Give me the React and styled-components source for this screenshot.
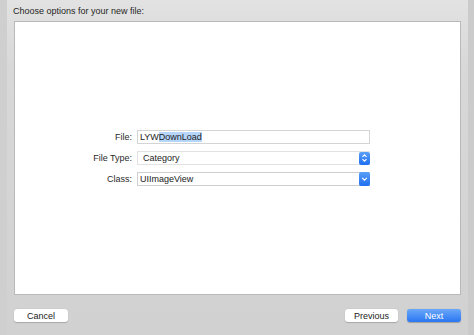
import React from "react";
import styled, { createGlobalStyle } from "styled-components";

const Global = createGlobalStyle`
  html, body { margin: 0; padding: 0; }
  body { font-family: "Liberation Sans", Arial, sans-serif; }
`;

const Window = styled.div`
  width: 474px;
  height: 335px;
  box-sizing: border-box;
  background: linear-gradient(#e2e2e2, #d8d8d8 20%, #d1d1d1);
  display: flex;
  flex-direction: column;
  border-left: 7px solid #cfcfcf;
  border-right: 6px solid #cbcbcb;
  overflow: hidden;
`;

const Title = styled.div`
  height: 21px;
  box-sizing: border-box;
  padding: 6px 0 0 6px;
  font-size: 9px;
  color: #262626;
`;

const Panel = styled.div`
  margin: 0 0 0 7px;
  width: 447px;
  height: 274px;
  box-sizing: border-box;
  background: #fff;
  border: 1px solid #b9b9b9;
  display: flex;
  align-items: center;
  justify-content: flex-start;
`;

const Form = styled.div`
  display: grid;
  grid-template-columns: 117px 233px;
  column-gap: 5px;
  row-gap: 7px;
  align-items: center;
  margin-top: 0px;
`;

const Label = styled.div`
  text-align: right;
  font-size: 9px;
  color: #2a2a2a;
`;

const Field = styled.div`
  height: 14px;
  box-sizing: border-box;
  border: 1px solid #d4d4d4;
  display: flex;
  align-items: center;
  padding-left: 2px;
  font-size: 9px;
  color: #222;
  background: #fff;
`;

const Sel = styled.span`
  background: #b5d5fb;
`;

const Popup = styled.div`
  height: 14px;
  box-sizing: border-box;
  border: 1px solid ${p => p.$border || "#e2e2e2"};
  border-right: none;
  display: flex;
  align-items: center;
  justify-content: space-between;
  padding-left: ${p => p.$pl || 3}px;
  font-size: 9px;
  color: #222;
  background: #fff;
`;

const Stepper = styled.div`
  width: 11px;
  height: ${p => p.$h || 14}px;
  border-radius: 2px;
  background: linear-gradient(#5aa0f7, #1f6ff0);
  display: flex;
  align-items: center;
  justify-content: center;
`;

const Footer = styled.div`
  flex: 1;
  display: flex;
  align-items: center;
  justify-content: space-between;
  padding: 1px 7px 0 7px;
`;

const Right = styled.div`
  display: flex;
  gap: 9px;
`;

const Button = styled.div`
  width: ${p => p.$w}px;
  height: 13px;
  box-sizing: border-box;
  border-radius: 3px;
  display: flex;
  align-items: center;
  justify-content: center;
  font-size: 9px;
  background: ${p => (p.$primary ? "linear-gradient(#6aa8f8, #2a76f2)" : "#fff")};
  color: ${p => (p.$primary ? "#fff" : "#222")};
  box-shadow: ${p => (p.$primary ? "0 0.5px 1px rgba(0,0,0,0.25)" : "0 0.5px 1px rgba(0,0,0,0.2)")};
`;

export default function App() {
  return (
    <>
      <Global />
      <Window>
        <Title>Choose options for your new file:</Title>
        <Panel>
          <Form>
            <Label>File:</Label>
            <Field>
              LYW<Sel>DownLoad</Sel>
            </Field>
            <Label>File Type:</Label>
            <Popup $pl={5}>
              Category
              <Stepper $h={13}>
                <svg width="7" height="10" viewBox="0 0 7 10">
                  <path d="M1.5 3.8 L3.5 1.8 L5.5 3.8 M1.5 6.2 L3.5 8.2 L5.5 6.2" stroke="#fff" strokeWidth="1.1" fill="none" />
                </svg>
              </Stepper>
            </Popup>
            <Label>Class:</Label>
            <Popup $pl={2} $border="#cfcfcf">
              UIImageView
              <Stepper>
                <svg width="7" height="6" viewBox="0 0 7 6">
                  <path d="M1.2 1.8 L3.5 4.1 L5.8 1.8" stroke="#fff" strokeWidth="1.2" fill="none" />
                </svg>
              </Stepper>
            </Popup>
          </Form>
        </Panel>
        <Footer>
          <Button $w={54}>Cancel</Button>
          <Right>
            <Button $w={53}>Previous</Button>
            <Button $w={54} $primary>Next</Button>
          </Right>
        </Footer>
      </Window>
    </>
  );
}
